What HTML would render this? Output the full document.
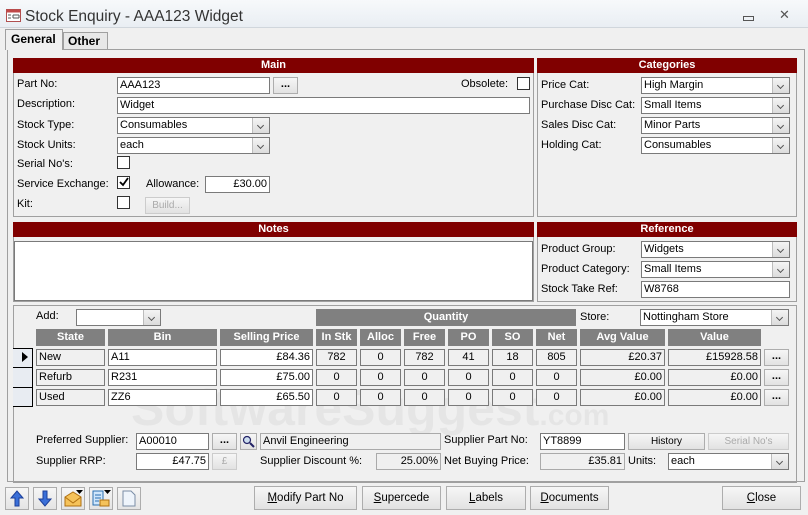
<!DOCTYPE html>
<html><head><meta charset="utf-8"><style>
*{box-sizing:border-box;margin:0;padding:0}
body{width:808px;height:515px;overflow:hidden;background:#f0f0f0;font-family:"Liberation Sans","DejaVu Sans",sans-serif;font-size:11px;color:#000;position:relative}
.a{position:absolute}
.lbl{position:absolute;font-size:11px;white-space:nowrap;line-height:13px}
.in{position:absolute;background:#fff;border:1px solid #7a7a7a;height:17px;padding:1px 2px;line-height:13px;white-space:nowrap;overflow:hidden}
.r{text-align:right}
.c{text-align:center}
.g{background:#f0f0f0}
.dd{position:absolute;right:0;top:0;width:17px;height:15px;background:linear-gradient(#f4f4f4,#dcdcdc);border-left:1px solid #bcbcbc}
.dd:after{content:"";position:absolute;left:5px;top:5px;width:4px;height:4px;border-right:1.5px solid #555;border-bottom:1.5px solid #555;transform:rotate(45deg)}
.btn{position:absolute;background:linear-gradient(#f6f6f6,#e2e2e2);border:1px solid #adadad;text-align:center;line-height:15px;white-space:nowrap}
.chk{position:absolute;width:13px;height:13px;border:1px solid #333;background:#fff}
.hd{position:absolute;background:#800000;color:#fff;font-weight:bold;text-align:center;height:15px;line-height:14px;font-size:11px}
.box{position:absolute;border:1px solid #a0a0a0}
.gh{position:absolute;background:#808080;color:#fff;font-weight:bold;text-align:center;height:17px;line-height:16px;top:329px}
.cell{position:absolute;border:1px solid #7a7a7a;background:#f0f0f0;height:17px;line-height:15px;text-align:center;padding:0 2px}
.cellw{background:#fff;text-align:left}
.tb{position:absolute;top:487px;width:24px;height:23px;border:1px solid #adadad;background:linear-gradient(#f6f6f6,#e4e4e4)}
.bb{position:absolute;top:486px;height:24px;line-height:22px;border:1px solid #adadad;background:linear-gradient(#f6f6f6,#e2e2e2);text-align:center;font-size:11.5px}
u{text-decoration:underline}
</style></head><body>
<!-- title bar -->
<div class="a" style="left:0;top:0;width:808px;height:28px;background:linear-gradient(#f7f9fb,#e9eef3);border-bottom:1px solid #d0d6dc"></div>
<svg class="a" style="left:6px;top:9px" width="15" height="13"><rect x="0.5" y="0.5" width="14" height="12" fill="#fff" stroke="#b05050"/><rect x="0.5" y="0.5" width="14" height="3" fill="#c04848"/><path d="M2 6h3M2 9h3M7 6h6M7 9h6M7 6v3M13 6v3" stroke="#555" fill="none"/></svg>
<div class="lbl" style="left:25px;top:7px;font-size:15.5px;line-height:19px;color:#333">Stock Enquiry - AAA123 Widget</div>
<div class="a" style="left:743px;top:16px;width:11px;height:5px;border:1px solid #555"></div>
<div class="lbl" style="left:779px;top:8px;font-size:13px;color:#555">&#x2715;</div>
<!-- tabs -->
<div class="a" style="left:63px;top:32px;width:45px;height:18px;border:1px solid #a0a0a0;border-bottom:none;background:#e8e8e8"></div>
<div class="lbl" style="left:68px;top:35px;font-weight:bold;font-size:12px">Other</div>
<div class="a" style="left:7px;top:49px;width:798px;height:433px;border:1px solid #a0a0a0;background:#f0f0f0"></div>
<div class="a" style="left:5px;top:29px;width:58px;height:21px;border:1px solid #a0a0a0;border-bottom:none;background:#f0f0f0"></div>
<div class="lbl" style="left:11px;top:33px;font-weight:bold;font-size:12px">General</div>
<!-- Main -->
<div class="box" style="left:13px;top:58px;width:521px;height:159px"></div>
<div class="hd" style="left:13px;top:58px;width:521px">Main</div>
<div class="lbl" style="left:17px;top:78px">Part No:</div>
<div class="in" style="left:117px;top:77px;width:153px">AAA123</div>
<div class="btn" style="left:273px;top:77px;width:25px;height:17px;font-weight:bold;line-height:12px">...</div>
<div class="lbl" style="left:461px;top:78px">Obsolete:</div>
<div class="chk" style="left:517px;top:77px"></div>
<div class="lbl" style="left:17px;top:98px">Description:</div>
<div class="in" style="left:117px;top:97px;width:413px">Widget</div>
<div class="lbl" style="left:17px;top:119px">Stock Type:</div>
<div class="in" style="left:117px;top:117px;width:153px">Consumables<div class="dd"></div></div>
<div class="lbl" style="left:17px;top:139px">Stock Units:</div>
<div class="in" style="left:117px;top:137px;width:153px">each<div class="dd"></div></div>
<div class="lbl" style="left:17px;top:158px">Serial No's:</div>
<div class="chk" style="left:117px;top:156px"></div>
<div class="lbl" style="left:17px;top:178px">Service Exchange:</div>
<div class="chk" style="left:117px;top:176px"><svg width="11" height="11" style="position:absolute;left:0;top:0"><path d="M2 5l3 3 5-7" stroke="#000" stroke-width="1.8" fill="none"/></svg></div>
<div class="lbl" style="left:146px;top:178px">Allowance:</div>
<div class="in r" style="left:205px;top:176px;width:65px">£30.00</div>
<div class="lbl" style="left:17px;top:198px">Kit:</div>
<div class="chk" style="left:117px;top:196px"></div>
<div class="btn" style="left:145px;top:197px;width:45px;height:17px;color:#aaa;font-size:10px;border-color:#ccc">Build...</div>
<!-- Categories -->
<div class="box" style="left:537px;top:58px;width:260px;height:159px"></div>
<div class="hd" style="left:537px;top:58px;width:260px">Categories</div>
<div class="lbl" style="left:541px;top:79px">Price Cat:</div>
<div class="in" style="left:641px;top:77px;width:149px">High Margin<div class="dd"></div></div>
<div class="lbl" style="left:541px;top:99px">Purchase Disc Cat:</div>
<div class="in" style="left:641px;top:97px;width:149px">Small Items<div class="dd"></div></div>
<div class="lbl" style="left:541px;top:119px">Sales Disc Cat:</div>
<div class="in" style="left:641px;top:117px;width:149px">Minor Parts<div class="dd"></div></div>
<div class="lbl" style="left:541px;top:139px">Holding Cat:</div>
<div class="in" style="left:641px;top:137px;width:149px">Consumables<div class="dd"></div></div>
<!-- Notes -->
<div class="box" style="left:13px;top:222px;width:521px;height:80px"></div>
<div class="hd" style="left:13px;top:222px;width:521px">Notes</div>
<div class="in" style="left:14px;top:241px;width:519px;height:60px"></div>
<!-- Reference -->
<div class="box" style="left:537px;top:222px;width:260px;height:80px"></div>
<div class="hd" style="left:537px;top:222px;width:260px">Reference</div>
<div class="lbl" style="left:541px;top:243px">Product Group:</div>
<div class="in" style="left:641px;top:241px;width:149px">Widgets<div class="dd"></div></div>
<div class="lbl" style="left:541px;top:263px">Product Category:</div>
<div class="in" style="left:641px;top:261px;width:149px">Small Items<div class="dd"></div></div>
<div class="lbl" style="left:541px;top:283px">Stock Take Ref:</div>
<div class="in" style="left:641px;top:281px;width:149px">W8768</div>
<!-- Bottom panel -->
<div class="box" style="left:13px;top:305px;width:784px;height:178px"></div>
<div class="lbl" style="left:131px;top:378px;font-size:50px;line-height:60px;font-weight:bold;color:rgba(0,0,0,0.045)">SoftwareSuggest<span style="font-size:30px">.com</span></div>
<div class="lbl" style="left:36px;top:310px">Add:</div>
<div class="in" style="left:76px;top:309px;width:85px">&nbsp;<div class="dd"></div></div>
<div class="gh" style="left:316px;top:309px;width:260px">Quantity</div>
<div class="lbl" style="left:580px;top:311px">Store:</div>
<div class="in" style="left:640px;top:309px;width:149px">Nottingham Store<div class="dd"></div></div>
<div class="gh" style="left:36px;width:69px">State</div>
<div class="gh" style="left:108px;width:109px">Bin</div>
<div class="gh" style="left:220px;width:93px">Selling Price</div>
<div class="gh" style="left:316px;width:41px">In Stk</div>
<div class="gh" style="left:360px;width:41px">Alloc</div>
<div class="gh" style="left:404px;width:41px">Free</div>
<div class="gh" style="left:448px;width:41px">PO</div>
<div class="gh" style="left:492px;width:41px">SO</div>
<div class="gh" style="left:536px;width:41px">Net</div>
<div class="gh" style="left:580px;width:85px">Avg Value</div>
<div class="gh" style="left:668px;width:93px">Value</div>
<div class="a" style="left:13px;top:348px;width:20px;height:59px;border:1px solid #000;border-left:none;background:#e8ecf2"></div>
<div class="a" style="left:13px;top:367px;width:19px;height:1px;background:#000"></div>
<div class="a" style="left:13px;top:387px;width:19px;height:1px;background:#000"></div>
<div class="a" style="left:22px;top:352px;width:0;height:0;border-left:6px solid #000;border-top:5px solid transparent;border-bottom:5px solid transparent"></div>

<div class="cell" style="left:36px;top:349px;width:69px;text-align:left">New</div>
<div class="cell cellw" style="left:108px;top:349px;width:109px">A11</div>
<div class="cell cellw r" style="left:220px;top:349px;width:93px;text-align:right">£84.36</div>
<div class="cell" style="left:316px;top:349px;width:41px">782</div>
<div class="cell" style="left:360px;top:349px;width:41px">0</div>
<div class="cell" style="left:404px;top:349px;width:41px">782</div>
<div class="cell" style="left:448px;top:349px;width:41px">41</div>
<div class="cell" style="left:492px;top:349px;width:41px">18</div>
<div class="cell" style="left:536px;top:349px;width:41px">805</div>
<div class="cell" style="left:580px;top:349px;width:85px;text-align:right">£20.37</div>
<div class="cell" style="left:668px;top:349px;width:93px;text-align:right">£15928.58</div>
<div class="btn" style="left:764px;top:349px;width:25px;height:17px;font-weight:bold;line-height:12px">...</div>

<div class="cell" style="left:36px;top:369px;width:69px;text-align:left">Refurb</div>
<div class="cell cellw" style="left:108px;top:369px;width:109px">R231</div>
<div class="cell cellw" style="left:220px;top:369px;width:93px;text-align:right">£75.00</div>
<div class="cell" style="left:316px;top:369px;width:41px">0</div>
<div class="cell" style="left:360px;top:369px;width:41px">0</div>
<div class="cell" style="left:404px;top:369px;width:41px">0</div>
<div class="cell" style="left:448px;top:369px;width:41px">0</div>
<div class="cell" style="left:492px;top:369px;width:41px">0</div>
<div class="cell" style="left:536px;top:369px;width:41px">0</div>
<div class="cell" style="left:580px;top:369px;width:85px;text-align:right">£0.00</div>
<div class="cell" style="left:668px;top:369px;width:93px;text-align:right">£0.00</div>
<div class="btn" style="left:764px;top:369px;width:25px;height:17px;font-weight:bold;line-height:12px">...</div>

<div class="cell" style="left:36px;top:389px;width:69px;text-align:left">Used</div>
<div class="cell cellw" style="left:108px;top:389px;width:109px">ZZ6</div>
<div class="cell cellw" style="left:220px;top:389px;width:93px;text-align:right">£65.50</div>
<div class="cell" style="left:316px;top:389px;width:41px">0</div>
<div class="cell" style="left:360px;top:389px;width:41px">0</div>
<div class="cell" style="left:404px;top:389px;width:41px">0</div>
<div class="cell" style="left:448px;top:389px;width:41px">0</div>
<div class="cell" style="left:492px;top:389px;width:41px">0</div>
<div class="cell" style="left:536px;top:389px;width:41px">0</div>
<div class="cell" style="left:580px;top:389px;width:85px;text-align:right">£0.00</div>
<div class="cell" style="left:668px;top:389px;width:93px;text-align:right">£0.00</div>
<div class="btn" style="left:764px;top:389px;width:25px;height:17px;font-weight:bold;line-height:12px">...</div>

<div class="lbl" style="left:36px;top:434px">Preferred Supplier:</div>
<div class="in" style="left:136px;top:433px;width:73px">A00010</div>
<div class="btn" style="left:212px;top:433px;width:25px;height:17px;font-weight:bold;line-height:12px">...</div>
<div class="btn" style="left:240px;top:433px;width:17px;height:17px"><svg width="15" height="15" style="position:absolute;left:0;top:0"><circle cx="6" cy="6" r="3.5" fill="#cde" stroke="#226" stroke-width="1.2"/><path d="M9 9l4 4" stroke="#226" stroke-width="2"/></svg></div>
<div class="in g" style="left:260px;top:433px;width:181px;border-color:#aaa">Anvil Engineering</div>
<div class="lbl" style="left:444px;top:434px">Supplier Part No:</div>
<div class="in" style="left:540px;top:433px;width:85px">YT8899</div>
<div class="btn" style="left:628px;top:433px;width:77px;height:17px;font-size:10px">History</div>
<div class="btn" style="left:708px;top:433px;width:81px;height:17px;font-size:10px;color:#aaa;border-color:#ccc">Serial No's</div>
<div class="lbl" style="left:36px;top:455px">Supplier RRP:</div>
<div class="in r" style="left:136px;top:453px;width:73px">£47.75</div>
<div class="btn" style="left:212px;top:453px;width:25px;height:17px;font-size:10px;color:#aaa;border-color:#ccc">£</div>
<div class="lbl" style="left:260px;top:455px">Supplier Discount %:</div>
<div class="in g r" style="left:376px;top:453px;width:65px;border-color:#aaa">25.00%</div>
<div class="lbl" style="left:444px;top:455px">Net Buying Price:</div>
<div class="in g r" style="left:540px;top:453px;width:85px;border-color:#aaa">£35.81</div>
<div class="lbl" style="left:628px;top:455px">Units:</div>
<div class="in" style="left:668px;top:453px;width:121px">each<div class="dd"></div></div>
<!-- toolbar -->
<div class="tb" style="left:5px"><svg width="22" height="21"><path d="M11 3l-6 7h4v8h4v-8h4z" fill="#3a6fd8" stroke="#1c3f9a"/></svg></div>
<div class="tb" style="left:33px"><svg width="22" height="21"><path d="M11 18l-6-7h4V3h4v8h4z" fill="#3a6fd8" stroke="#1c3f9a"/></svg></div>
<div class="tb" style="left:61px"><svg width="22" height="21"><path d="M3 9l8-5 8 5v9H3z" fill="#f5c25a" stroke="#b07010"/><path d="M3 9l8 6 8-6" stroke="#b07010" fill="none"/><path d="M14 2h7l-3.5 4z" fill="#000"/></svg></div>
<div class="tb" style="left:89px"><svg width="22" height="21"><rect x="3" y="3" width="10" height="14" fill="#cfe6fb" stroke="#2a6fb0"/><path d="M5 7h6M5 10h6M5 13h4" stroke="#2a6fb0"/><rect x="10" y="12" width="9" height="6" fill="#f5c25a" stroke="#b07010"/><path d="M14 2h7l-3.5 4z" fill="#000"/></svg></div>
<div class="tb" style="left:117px"><svg width="22" height="21"><path d="M5 3h8l4 4v11H5z" fill="#eef4fb" stroke="#7a8da6"/></svg></div>
<div class="bb" style="left:254px;width:103px"><u>M</u>odify Part No</div>
<div class="bb" style="left:362px;width:79px"><u>S</u>upercede</div>
<div class="bb" style="left:446px;width:80px"><u>L</u>abels</div>
<div class="bb" style="left:530px;width:79px"><u>D</u>ocuments</div>
<div class="bb" style="left:722px;width:79px"><u>C</u>lose</div>
</body></html>
